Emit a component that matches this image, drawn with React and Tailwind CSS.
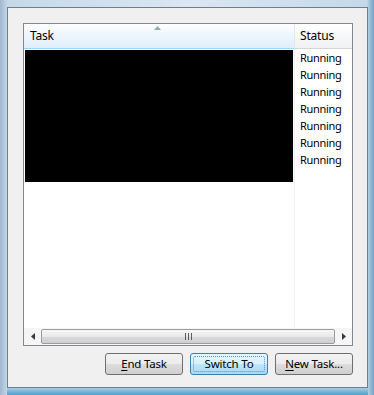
const rows = Array.from({ length: 7 });

function Button({ children, primary }) {
  return (
    <button
      className={
        primary
          ? "relative h-[22px] w-[78px] rounded-[3px] border border-[#3c7fb1] bg-[linear-gradient(#eaf6fd_0%,#d9f0fc_50%,#bee6fd_51%,#a7d9f5_100%)] text-[11.5px] tracking-[-0.2px] text-black"
          : "relative h-[22px] w-[78px] rounded-[3px] border border-[#707070] bg-[linear-gradient(#f2f2f2_0%,#ebebeb_50%,#dddddd_51%,#cfcfcf_100%)] text-[11.5px] tracking-[-0.2px] text-black"
      }
    >
      {primary ? (
        <span className="absolute inset-[2px] rounded-[2px] border border-dotted border-[#5a8fc0]" />
      ) : null}
      <span className="relative">{children}</span>
    </button>
  );
}

export default function App() {
  return (
    <div
      className="h-[395px] w-[374px] overflow-hidden bg-[linear-gradient(90deg,#9fb7cf_0%,#c5d8ea_2%,#dbe7f2_50%,#c5d8ea_98%,#6fa3c8_100%)] pl-[7px] pr-[6px] pt-[7px]"
      style={{ fontFamily: '"Noto Sans", "Open Sans", sans-serif' }}
    >
      <div className="flex h-[381px] flex-col border border-[#6f7d8c] bg-[#f0f0f0] pl-[15px] pr-[14px] pt-[15px]">
        <div className="flex h-[323px] flex-col border border-[#828790] bg-white">
          <div className="flex h-[25px] text-[12px] tracking-[-0.2px] text-black">
            <div className="relative flex w-[270px] items-center border-b border-[#96d9f9] bg-[linear-gradient(#ffffff_0%,#eef7fd_40%,#e0eefa_100%)] pl-[6px]">
              <svg className="absolute left-[130px] top-[2px]" width="7" height="4" viewBox="0 0 7 4">
                <path d="M0 4 L3.5 0 L7 4 Z" fill="#9aa7b5" />
              </svg>
              Task
            </div>
            <div className="flex flex-1 items-center border-b border-l border-[#e5e5e5] border-b-[#d5d5d5] bg-[linear-gradient(#ffffff_0%,#f7f8f9_50%,#f1f2f4_100%)] pl-[5px]">
              Status
            </div>
          </div>
          <div className="flex flex-1">
            <div className="w-[270px] pl-[1px] pt-[1px]">
              <div className="h-[132px] w-[268px] bg-black" />
            </div>
            <div className="flex-1 border-l border-[#f0f0f0]">
              {rows.map((_, i) => (
                <div key={i} className="flex h-[17px] items-center pl-[5px] text-[11px] leading-none tracking-[-0.3px] text-black">
                  Running
                </div>
              ))}
            </div>
          </div>
          <div className="flex h-[17px] items-center bg-[#f5f5f5]">
            <div className="flex w-[17px] items-center justify-center">
              <svg width="4" height="7" viewBox="0 0 4 7">
                <path d="M4 0 L0 3.5 L4 7 Z" fill="#3a3a3a" />
              </svg>
            </div>
            <div className="flex h-[15px] flex-1 items-center justify-center rounded-[2px] border border-[#9b9b9b] bg-[linear-gradient(#f6f6f6_0%,#e9e9e9_50%,#d8d8d8_51%,#d0d0d0_100%)]">
              <div className="flex gap-[2px]">
                <span className="h-[7px] w-[1px] bg-[#5b5b5b]" />
                <span className="h-[7px] w-[1px] bg-[#5b5b5b]" />
                <span className="h-[7px] w-[1px] bg-[#5b5b5b]" />
              </div>
            </div>
            <div className="flex w-[17px] items-center justify-center">
              <svg width="4" height="7" viewBox="0 0 4 7">
                <path d="M0 0 L4 3.5 L0 7 Z" fill="#3a3a3a" />
              </svg>
            </div>
          </div>
        </div>
        <div className="mt-[7px] flex justify-end gap-[7px]">
          <Button>
            <span className="underline underline-offset-2">E</span>nd Task
          </Button>
          <Button primary>Switch To</Button>
          <Button>
            <span className="underline underline-offset-2">N</span>ew Task...
          </Button>
        </div>
      </div>
      <div className="h-[7px] bg-[linear-gradient(#a9cde6,#4f9fc9)]" />
    </div>
  );
}
